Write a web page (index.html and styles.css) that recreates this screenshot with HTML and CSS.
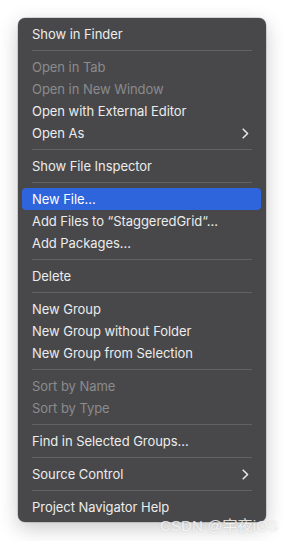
FILE: index.html
```html
<!DOCTYPE html>
<html>
<head>
<meta charset="utf-8">
<link rel="stylesheet" href="styles.css">
</head>
<body>
<div class="menu">
  <div class="item">Show in Finder</div>
  <div class="sep"></div>
  <div class="item disabled">Open in Tab</div>
  <div class="item disabled">Open in New Window</div>
  <div class="item">Open with External Editor</div>
  <div class="item sub">Open As<svg class="chev" width="7" height="11" viewBox="0 0 7 11"><path d="M1.2 1.2 L5.6 5.5 L1.2 9.8" fill="none" stroke="currentColor" stroke-width="1.6" stroke-linecap="round" stroke-linejoin="round"/></svg></div>
  <div class="sep"></div>
  <div class="item">Show File Inspector</div>
  <div class="sep"></div>
  <div class="item active">New File...</div>
  <div class="item">Add Files to “StaggeredGrid“...</div>
  <div class="item">Add Packages...</div>
  <div class="sep"></div>
  <div class="item">Delete</div>
  <div class="sep"></div>
  <div class="item">New Group</div>
  <div class="item">New Group without Folder</div>
  <div class="item">New Group from Selection</div>
  <div class="sep"></div>
  <div class="item disabled">Sort by Name</div>
  <div class="item disabled">Sort by Type</div>
  <div class="sep"></div>
  <div class="item">Find in Selected Groups...</div>
  <div class="sep"></div>
  <div class="item sub">Source Control<svg class="chev" width="7" height="11" viewBox="0 0 7 11"><path d="M1.2 1.2 L5.6 5.5 L1.2 9.8" fill="none" stroke="currentColor" stroke-width="1.6" stroke-linecap="round" stroke-linejoin="round"/></svg></div>
  <div class="sep"></div>
  <div class="item">Project Navigator Help</div>
</div>
<div class="watermark">CSDN @宇夜iOS</div>
</body>
</html>
```

FILE: styles.css
```css
html, body {
  margin: 0;
  padding: 0;
  background: #ffffff;
}
body {
  position: relative;
  width: 284px;
  height: 541px;
  overflow: hidden;
  font-family: Inter, "Noto Sans", "Liberation Sans", sans-serif;
}
.menu {
  margin: 18px 0 0 18px;
  width: 248px;
  box-sizing: border-box;
  padding: 5px 0 4px;
  background: #48484a;
  border-radius: 7px;
  box-shadow: 0 0 0 0.5px rgba(0,0,0,0.25), 0 6px 20px rgba(0,0,0,0.22);
}
.item {
  height: 22px;
  margin: 0 5px 0 4px;
  padding: 0 12px 0 10px;
  border-radius: 4px;
  display: flex;
  align-items: center;
  justify-content: space-between;
  font-size: 13px;
  color: #ececec;
  letter-spacing: -0.05px;
  white-space: nowrap;
}
.item.disabled {
  color: #8b8b8d;
}
.item.active {
  background: #2e64dc;
  color: #ffffff;
}
.chev {
  color: #e6e6e6;
  display: block;
}
.sep {
  height: 1px;
  margin: 5px 14px;
  background: #626264;
}
.watermark {
  position: absolute;
  left: 160px;
  top: 514px;
  font-size: 15px;
  color: rgba(255,255,255,0.8);
  font-family: "Liberation Sans", "Noto Sans CJK SC", sans-serif;
  letter-spacing: 0.1px;
  text-shadow: 0 0 1.5px rgba(120,120,120,0.35);
  white-space: nowrap;
}
```
